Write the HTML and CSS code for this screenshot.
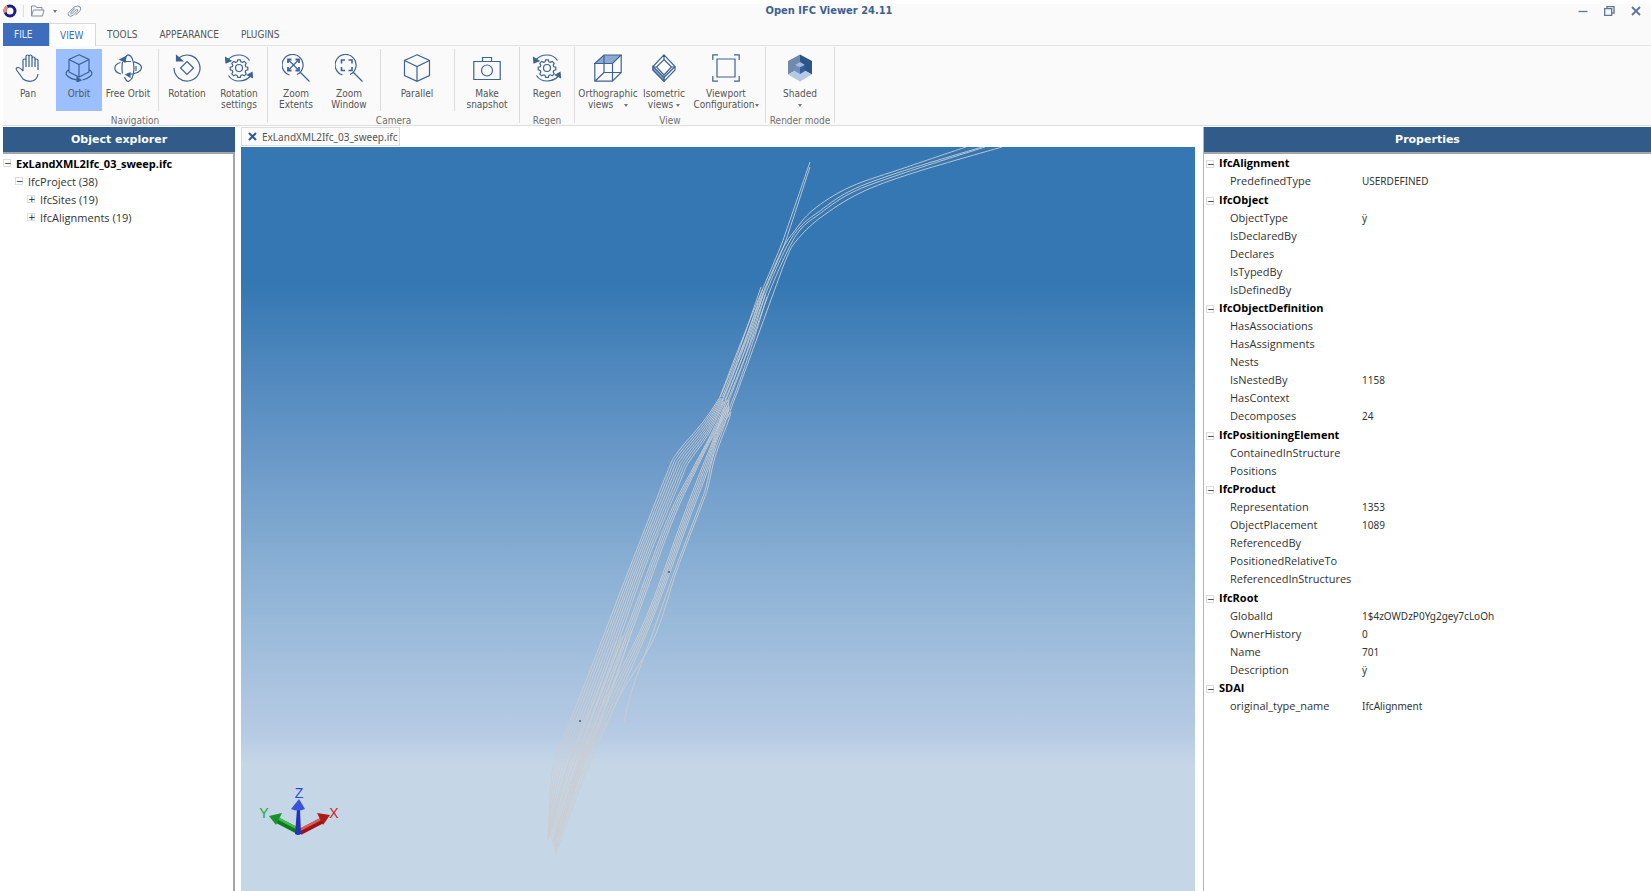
FILE: index.html
```html
<!DOCTYPE html>
<html lang="en">
<head>
<meta charset="utf-8">
<title>Open IFC Viewer 24.11</title>
<link rel="stylesheet" href="styles.css">
</head>
<body>
<div class="app">
  <header class="titlebar">
    <div class="quick">
      <svg class="logo" viewBox="0 0 14 14"><circle cx="7" cy="7" r="5" fill="none" stroke="#1d1a86" stroke-width="3"/><path d="M2.300 8.500A5 5 0 0 1 4.500 2.700" fill="none" stroke="#f08a6c" stroke-width="3"/></svg>
      <span class="quick-sep"></span>
      <button class="quick-btn" aria-label="Open"><svg width="15" height="12" viewBox="0 0 15 12"><path d="M1.500 11V1h4l1 1.500H12V5M1.500 11L3.500 5H14L12.500 11Z"/></svg></button>
      <button class="quick-btn" aria-label="More"><span class="caret"></span></button>
      <button class="quick-btn" aria-label="Attach"><svg width="15" height="13" viewBox="0 0 15 13"><path d="M5 8.500L9.500 4.500Q11 4 10.500 6L6.500 10Q3.500 12.500 1.500 10.500Q.2 8.500 2.500 6.500L7.500 2Q11 .0 13.200 2Q14.700 4.200 12.500 6.500L8.500 10M4 9.500Q3.500 7 6 5L8 3.500"/></svg></button>
    </div>
    <h1 class="title">Open IFC Viewer 24.11</h1>
    <div class="window-controls">
      <button aria-label="Minimize"><svg width="10" height="10" viewBox="0 0 10 10"><path d="M.5 5.500h9"/></svg></button>
      <button aria-label="Restore"><svg width="11" height="10" viewBox="0 0 11 10"><path d="M.7 2.700h7v6.800h-7zM3 2.500V.6h7v6.500H8"/></svg></button>
      <button aria-label="Close"><svg width="10" height="10" viewBox="0 0 10 10"><path d="M1 1l8 8M9 1l-8 8" stroke-width="1.800"/></svg></button>
    </div>
  </header>

  <nav class="tabs">
    <button class="tab tab-file">FILE</button>
    <button class="tab tab-active">VIEW</button>
    <button class="tab">TOOLS</button>
    <button class="tab">APPEARANCE</button>
    <button class="tab">PLUGINS</button>
  </nav>

  <section class="ribbon">
    <div class="group">
      <div class="tools tools-nav">
        <button class="tool w50"><svg viewBox="0 0 28 28"><path d="M9 17V6.500a1.500 1.500 0 0 1 3 0V13M12 13V2.500a1.500 1.500 0 0 1 3 0V13M15 13V2.500a1.500 1.500 0 0 1 3 0V13M18 4.500a1.500 1.500 0 0 1 3 0V13M21 6.500a1.500 1.500 0 0 1 3 0V16M9 17Q6 13.500 4 13.500Q1.500 13.500 2.500 16Q7 22 9 25Q11.500 27.300 16 27.300Q23 27 24 20"/></svg><span>Pan</span></button>
        <button class="tool w46 tool-on"><svg viewBox="0 0 28 28"><path d="M14 .8L24 5.500V18L14 23L4 18V5.500ZM4 5.500L14 10.500L24 5.500M14 10.500V23M4 15.500Q-1 19 2.500 22Q6.500 25.500 14 26.200M24 15.500Q29 19 25.500 22Q22.500 25 17.500 26"/><path class="solid" d="M12 23.500L16 26.200L12 28Z"/></svg><span>Orbit</span></button>
        <button class="tool w52"><svg viewBox="0 0 28 28"><path d="M10.500 23Q12 27.300 14.500 27.300Q19.500 26 20 14Q19.500 2 14.500 .8Q12.500 .8 11 4M8.500 8Q7.500 14 8.500 19.500M10 7.500H17M20 7.800Q27.500 9.500 27.500 14Q26.500 19.500 14 20.500M7 20Q.8 18.500 .8 14Q1 10 6.500 8.500M22 12v5"/><path class="solid" d="M6 5.500L12 2.500L11 8ZM16 19V23L12 20.700Z"/></svg><span>Free Orbit</span></button>
        <i class="tool-sep"></i>
        <button class="tool w56"><svg viewBox="0 0 28 28"><path d="M6 3.800A13 13 0 1 1 1 14M14 7.500L20.500 14L14 20.500L7.500 14Z"/><path class="solid" d="M3.500 1.500V7H9.500Z"/></svg><span>Rotation</span></button>
        <button class="tool w48"><svg viewBox="0 0 28 28"><use href="#regen"/></svg><span>Rotation<br>settings</span></button>
      </div>
      <div class="caption">Navigation</div>
    </div>

    <div class="group">
      <div class="tools tools-cam">
        <button class="tool w52"><svg viewBox="0 0 28 28"><path d="M7.500 21A10.500 10.500 0 1 1 15 20.500M18.500 18.500L27.500 27.500M6.500 6L16.500 16M16.500 6L6.500 16"/><path d="M6 9V5.500H9.500M13.500 5.500H17V9M6 13V16.500H9.500M13.500 16.500H17V13" stroke-width="1.800"/></svg><span>Zoom<br>Extents</span></button>
        <button class="tool w54"><svg viewBox="0 0 28 28"><path d="M7.500 21A10.500 10.500 0 1 1 15 20.500M18.500 18.500L27.500 27.500"/><path d="M6.500 9.500V6H10M13.500 6H17V9.500M6.500 13V16.500H10M13.500 16.500H17V13" stroke-width="1.600"/></svg><span>Zoom<br>Window</span></button>
        <i class="tool-sep"></i>
        <button class="tool w72"><svg viewBox="0 0 28 28"><path d="M14 .8L26.500 6.500V21.500L14 27.300L1.500 21.500V6.500ZM1.500 6.500L14 12.500L26.500 6.500M14 12.500V27.300"/></svg><span>Parallel</span></button>
        <i class="tool-sep"></i>
        <button class="tool w64"><svg viewBox="0 0 28 28"><path d="M.8 7.500H27.200V25.500H.8ZM9.500 7V3.500H18.500V7"/><circle cx="14" cy="16.500" r="5.500"/></svg><span>Make<br>snapshot</span></button>
      </div>
      <div class="caption">Camera</div>
    </div>

    <div class="group">
      <div class="tools">
        <button class="tool w54"><svg viewBox="0 0 28 28"><g id="regen"><path d="M2.500 6Q7 1 14 1Q21 1 24.500 6.500M25.500 22Q21 27 14 27Q7 27 3.500 21.500"/><path class="solid" d="M.5 3.500L1 9L6 7ZM22.500 21L27 18.500L27.500 23.500Z"/><circle cx="14" cy="14" r="3.500"/><path d="M12.700 5.800h2.600l.6 2 1.500.6 1.900-1 1.900 1.900-1 1.900.6 1.500 2 .6v2.600l-2 .6-.6 1.500 1 1.900-1.900 1.900-1.900-1-1.500.6-.6 2h-2.600l-.6-2-1.500-.6-1.900 1-1.900-1.900 1-1.900-.6-1.500-2-.6v-2.600l2-.6.6-1.500-1-1.900 1.900-1.900 1.900 1 1.500-.6Z"/></g></svg><span>Regen</span></button>
      </div>
      <div class="caption">Regen</div>
    </div>

    <div class="group">
      <div class="tools tools-view">
        <button class="tool w58"><svg viewBox="0 0 28 28"><path d="M.8 9.500L10 1H27.200L18.500 9.500Z" fill="#8ea9cf"/><path d="M.8 9.500V27.200H18.500V9.500M18.500 27.200L27.200 18.500V1M10 9.500V18.500H27M10 18.500L.8 27.200M10 1V9"/></svg><span>Orthographic<br>views <b class="caret caret-far"></b></span></button>
        <button class="tool w54"><svg viewBox="0 0 28 28"><path d="M14 .8L25 12.500V16L14 27.300L3 16V12.500ZM14 5.500L21.500 13L14 21L6.500 13ZM14 .8V5.500M3 13H6.500M21.500 13H25M14 21V27.300"/><path d="M3 12.500L14 23.500V27L3 16ZM25 12.500L14 23.500" fill="#8ea9cf"/></svg><span>Isometric<br>views <b class="caret"></b></span></button>
        <button class="tool w70"><svg viewBox="0 0 28 28"><path d="M5 5H23V23H5Z"/><path d="M.8 6V.8H6M22 .8H27.200V6M.8 22V27.200H6M22 27.200H27.200V22"/></svg><span>Viewport<br>Configuration<b class="caret"></b></span></button>
      </div>
      <div class="caption">View</div>
    </div>

    <div class="group">
      <div class="tools">
        <button class="tool w68"><svg class="flat" viewBox="0 0 28 28"><path fill="#7189aa" d="M14 .5L2 7V20.500L14 14Z"/><path fill="#2d548b" d="M14 .5L26 7V20.500L14 14Z"/><path fill="#b5c8e4" d="M2 20.500L14 14L26 20.500L14 27.500Z"/><path fill="#a5bbdb" d="M14 8L19 11L14 13.500L9 11Z"/><path fill="#6f8eb9" d="M9 11L14 13.500V20L9 17Z"/><path fill="#37609a" d="M19 11L14 13.500V20L19 17Z"/></svg><span>Shaded<br><b class="caret"></b></span></button>
      </div>
      <div class="caption">Render mode</div>
    </div>
  </section>

  <main class="workspace">
    <aside class="panel explorer">
      <h2 class="panel-title">Object explorer</h2>
      <ul class="tree">
        <li><div class="node root"><button class="toggle" aria-label="Collapse">−</button>ExLandXML2Ifc_03_sweep.ifc</div>
          <ul>
            <li><div class="node"><button class="toggle" aria-label="Collapse">−</button>IfcProject (38)</div>
              <ul>
                <li><div class="node"><button class="toggle" aria-label="Expand">+</button>IfcSites (19)</div></li>
                <li><div class="node"><button class="toggle" aria-label="Expand">+</button>IfcAlignments (19)</div></li>
              </ul>
            </li>
          </ul>
        </li>
      </ul>
    </aside>

    <section class="document">
      <div class="doc-tabs">
        <button class="doc-tab"><svg width="9" height="9" viewBox="0 0 9 9"><path d="M1 1l7 7M8 1L1 8"/></svg>ExLandXML2Ifc_03_sweep.ifc</button>
      </div>
      <div class="viewport">
        <svg class="scene" viewBox="241 147 954 744" preserveAspectRatio="xMinYMin slice">
          <g id="strands"></g>
          <circle cx="669" cy="572" r="1" fill="#4c5a68" stroke="none"/>
          <circle cx="580" cy="721" r="1" fill="#4c5a68" stroke="none"/>
        </svg>
        <svg class="axes" width="84" height="56" viewBox="0 0 84 56">
          <path d="M41 47L18 35" stroke="#0d7a1c" stroke-width="6"/><path d="M41 45L18 33" stroke="#3fc04a" stroke-width="2"/>
          <path d="M10 31L23 28L17 40Z" fill="#17932a"/>
          <path d="M41 47L64 35" stroke="#9c1517" stroke-width="6"/><path d="M41 45L64 33" stroke="#e06060" stroke-width="2"/>
          <path d="M71 30L58 28L64 40Z" fill="#ad1a1a"/>
          <path d="M38 24L36 49Q39 51 42 49L41 24Z" fill="#2433b5"/><path d="M40 14L32 24Q39 27 46 24Z" fill="#3a53dc"/>
          <text x="40" y="13" fill="#2a49e0">Z</text><text x="5" y="33" fill="#22a833">Y</text><text x="75" y="33" fill="#cf2327">X</text>
        </svg>
      </div>
    </section>

    <aside class="panel properties">
      <h2 class="panel-title">Properties</h2>
      <table class="props">
        <colgroup><col class="col-name"><col></colgroup>
        <tbody>
          <tr class="head"><th colspan="2"><button class="toggle" aria-label="Collapse">−</button>IfcAlignment</th></tr>
          <tr><td>PredefinedType</td><td>USERDEFINED</td></tr>
        </tbody>
        <tbody>
          <tr class="head"><th colspan="2"><button class="toggle" aria-label="Collapse">−</button>IfcObject</th></tr>
          <tr><td>ObjectType</td><td>ÿ</td></tr>
          <tr><td>IsDeclaredBy</td><td></td></tr>
          <tr><td>Declares</td><td></td></tr>
          <tr><td>IsTypedBy</td><td></td></tr>
          <tr><td>IsDefinedBy</td><td></td></tr>
        </tbody>
        <tbody>
          <tr class="head"><th colspan="2"><button class="toggle" aria-label="Collapse">−</button>IfcObjectDefinition</th></tr>
          <tr><td>HasAssociations</td><td></td></tr>
          <tr><td>HasAssignments</td><td></td></tr>
          <tr><td>Nests</td><td></td></tr>
          <tr><td>IsNestedBy</td><td>1158</td></tr>
          <tr><td>HasContext</td><td></td></tr>
          <tr><td>Decomposes</td><td>24</td></tr>
        </tbody>
        <tbody>
          <tr class="head"><th colspan="2"><button class="toggle" aria-label="Collapse">−</button>IfcPositioningElement</th></tr>
          <tr><td>ContainedInStructure</td><td></td></tr>
          <tr><td>Positions</td><td></td></tr>
        </tbody>
        <tbody>
          <tr class="head"><th colspan="2"><button class="toggle" aria-label="Collapse">−</button>IfcProduct</th></tr>
          <tr><td>Representation</td><td>1353</td></tr>
          <tr><td>ObjectPlacement</td><td>1089</td></tr>
          <tr><td>ReferencedBy</td><td></td></tr>
          <tr><td>PositionedRelativeTo</td><td></td></tr>
          <tr><td>ReferencedInStructures</td><td></td></tr>
        </tbody>
        <tbody>
          <tr class="head"><th colspan="2"><button class="toggle" aria-label="Collapse">−</button>IfcRoot</th></tr>
          <tr><td>GlobalId</td><td>1$4zOWDzP0Yg2gey7cLoOh</td></tr>
          <tr><td>OwnerHistory</td><td>0</td></tr>
          <tr><td>Name</td><td>701</td></tr>
          <tr><td>Description</td><td>ÿ</td></tr>
        </tbody>
        <tbody>
          <tr class="head"><th colspan="2"><button class="toggle" aria-label="Collapse">−</button>SDAI</th></tr>
          <tr><td>original_type_name</td><td>IfcAlignment</td></tr>
        </tbody>
      </table>
    </aside>
  </main>
</div>
<script src="scene.js"></script>
</body>
</html>
```

FILE: styles.css
```css
* { box-sizing: border-box; }
html, body { height: 100%; }
body { margin: 0; background: #fff; font-family: "DejaVu Sans Condensed", "DejaVu Sans", sans-serif; font-size: 10px; color: #555; overflow: hidden; }
button { font: inherit; color: inherit; background: none; border: 0; padding: 0; }
ul { list-style: none; margin: 0; padding: 0; }
h1, h2 { margin: 0; }
svg { display: block; fill: none; stroke: #3d6393; }
.app { min-height: 100vh; padding: 4px 0 0 3px; display: flex; flex-direction: column; }

.titlebar { display: grid; grid-template-columns: 1fr auto 1fr; align-items: center; height: 19px; padding-bottom: 5px; background: #fafafa; }
.quick { display: flex; align-items: center; gap: 6px; }
.logo { width: 14px; height: 14px; }
.quick-sep { width: 1px; height: 12px; background: #ddd; }
.quick-btn:first-of-type { margin-right: 2px; }
.quick-btn:last-of-type { margin-left: 4px; }
.quick-btn svg { stroke: #7d90a8; }
.title { font: bold 11px/14px "DejaVu Sans Condensed", "DejaVu Sans", sans-serif; color: #3d628f; padding-left: 4px; }
.window-controls { display: flex; justify-content: flex-end; gap: 16px; padding-right: 10px; }
.window-controls svg { stroke: #5c7599; stroke-width: 1.300; }

.tabs { display: flex; height: 23px; background: #fafafa; border-bottom: 1px solid #e2e2e2; }
.tab { padding: 0 11px; line-height: 24px; margin-bottom: -1px; text-align: left; }
.tab-file { width: 46px; background: #3f6dbd; color: #e6eefb; }
.tab-active { width: 47px; padding: 0 10px; line-height: 23px; background: #fff; color: #3f6dbd; border: 1px solid #d8d8d8; border-bottom: 0; }

.ribbon { display: flex; height: 80px; background: #fafafa; border-bottom: 1px solid #dedede; }
.group { display: flex; flex-direction: column; gap: 4px; border-right: 1px solid #dcdcdc; margin-top: 1px; margin-bottom: 2px; }
.tools { display: flex; padding-top: 2px; height: 64px; }
.tools-nav { padding-right: 4px; }
.tools-cam { padding-left: 2px; }
.tools-view { padding: 2px 4px 0; }
.tool { display: flex; flex-direction: column; align-items: center; gap: 6px; padding-top: 5px; height: 62px; line-height: 11px; white-space: nowrap; }
.tool svg { width: 28px; height: 28px; stroke-width: 1.200; flex: none; }
.tool .solid { fill: #3d6393; }
.tool svg.flat { stroke: none; }
.tool-on { background: #9bbfff; margin-left: 3px; }
.tool-sep { width: 1px; height: 62px; background: #dcdcdc; margin: 0 0 0 4px; }
.tools-cam .w72 + .tool-sep { margin-left: 1px; }
.w46 { width: 46px; } .w48 { width: 48px; } .w50 { width: 50px; } .w52 { width: 52px; } .w54 { width: 54px; } .w56 { width: 56px; }
.w58 { width: 58px; } .w64 { width: 64px; } .w68 { width: 68px; } .w70 { width: 70px; } .w72 { width: 72px; }
.caption { text-align: center; line-height: 11px; color: #707070; }
.caret { display: inline-block; border: 2px solid transparent; border-top: 3px solid #777; border-bottom: 0; vertical-align: middle; }
.caret-far { margin-left: 8px; }

.workspace { flex: 1; display: grid; grid-template-columns: 232px 1fr 448px; padding-top: 1px; }
.panel { display: flex; flex-direction: column; }
.panel-title { height: 25px; background: #315b88; color: #fff; text-align: center; font: bold 11px/25px "DejaVu Sans", sans-serif; }
.tree, .props { font-family: "Open Sans", "Noto Sans", sans-serif; font-size: 11px; color: #333; }
.tree { flex: 1; border-top: 2px solid #a5a5a5; border-right: 2px solid #a5a5a5; }
.tree ul { padding-left: 12px; }
.node { display: flex; align-items: center; height: 18px; gap: 5px; }
.root, .props th { font-weight: bold; color: #000; }
.toggle { flex: none; width: 8px; height: 8px; border: 1px solid #ddd; background: #fff; font: 9px/6px "DejaVu Sans", sans-serif; color: #222; }

.document { padding: 0 8px 0 6px; display: flex; flex-direction: column; min-width: 0; }
.doc-tabs { height: 20px; display: flex; }
.doc-tab { display: flex; align-items: center; gap: 5px; height: 19px; padding: 0 2px 0 6px; border: 1px solid #ddd; background: #fcfcfc; font-family: "Noto Sans", sans-serif; }
.doc-tab svg { stroke: #2f5b8c; stroke-width: 2; }
.viewport { flex: 1; position: relative; background: linear-gradient(#3477b2 0, #3477b2 18%, #6495c6 39%, #93b6d7 61%, #b7cbe4 79%, #c5d6e7 83%, #c5d6e7); }
.scene { position: absolute; inset: 0; width: 100%; height: 100%; }
#strands { stroke: #cbcdd0; stroke-width: 1; stroke-opacity: .9; }
.axes { position: absolute; left: 18px; bottom: 50px; }
.axes path[fill] { stroke: none; }
.axes text { font: 14px "Liberation Sans", sans-serif; stroke: none; text-anchor: middle; }

.properties { border-left: 1px solid #b5b5b5; }
.props { border-collapse: collapse; width: 100%; border-top: 2px solid #a5a5a5; table-layout: fixed; }
.col-name { width: 158px; }
.props th, .props td { height: 18px; padding: 0; line-height: 18px; text-align: left; }
.props tbody:nth-of-type(even) th { height: 19px; }
.props th { padding-left: 2px; }
.props th .toggle { vertical-align: middle; margin-right: 5px; }
.props td:first-child { padding-left: 26px; }
.props td:last-child { font: 10px/18px "Noto Sans", sans-serif; }
```

FILE: scene.js
```js
// Each bundle runs between two edge strands; the strands between are interpolated.
const bundles = [
  { n: 1, a: [[966,147],[907,167],[850,187],[813,210],[793,233],[782,250],[763,293],[745,340],[722,397]] },
  { n: 2, a: [[982,147],[900,172],[850,191],[817,213],[800,227],[786,248],[766,293],[748,343],[725,400]],
          b: [[985,147],[901,174],[851,193],[818,215],[801,229],[788,250],[769,293],[750,345],[727,402]] },
  { n: 1, a: [[1002,147],[913,173],[860,193],[820,218],[797,240],[787,257],[772,297],[748,363],[728,417]] },
  { n: 2, a: [[810,162],[790,220],[780,248],[761,293],[738,350],[720,397]],
          b: [[810,167],[792,222],[783,248],[764,293],[742,352],[723,400]] },
  { n: 5, a: [[761,287],[738,353],[720,397]],
          b: [[767,297],[747,360],[728,412]] },
  { n: 8, a: [[720,397],[703,422],[677,453],[667,473],[630,567],[593,663],[560,747],[552,773],[548,837]],
          b: [[725,402],[708,435],[689,462],[680,482],[645,567],[611,663],[580,747],[566,787],[548,840]] },
  { n: 4, a: [[725,405],[708,440],[692,470],[667,520],[630,620],[597,703],[575,770],[562,805],[553,842]],
          b: [[728,410],[711,440],[696,470],[673,520],[636,620],[606,703],[580,770],[567,812],[555,854]] },
  { n: 5, a: [[727,400],[713,440],[701,470],[682,520],[645,620],[604,703],[577,770],[553,842]],
          b: [[730,412],[717,440],[708,470],[689,520],[652,620],[616,703],[587,770],[556,853]] },
  { n: 2, a: [[729,400],[726,420],[713,457],[706,487],[699,507],[675,570],[651,638],[633,687],[624,722]],
          b: [[731,412],[728,422],[715,457],[708,487],[701,507],[677,570],[654,638],[622,692],[597,745]] },
  { n: 4, a: [[617,640],[598,690],[567,770],[549,838]],
          b: [[632,630],[612,690],[582,770],[553,845]] }
];

// Catmull-Rom spline through the points, as cubic Béziers.
function spline(p) {
  let d = `M${p[0]}`;
  for (let i = 0; i < p.length - 1; i++) {
    const p0 = p[i - 1] || p[i], p1 = p[i], p2 = p[i + 1], p3 = p[i + 2] || p2;
    const c1 = [p1[0] + (p2[0] - p0[0]) / 6, p1[1] + (p2[1] - p0[1]) / 6];
    const c2 = [p2[0] - (p3[0] - p1[0]) / 6, p2[1] - (p3[1] - p1[1]) / 6];
    d += `C${c1} ${c2} ${p2}`;
  }
  return d;
}

const host = document.getElementById("strands");
for (const { n, a, b = a } of bundles) {
  for (let i = 0; i < n; i++) {
    const t = n > 1 ? i / (n - 1) : 0;
    const path = document.createElementNS("http://www.w3.org/2000/svg", "path");
    path.setAttribute("d", spline(a.map(([x, y], k) => [x + (b[k][0] - x) * t, y + (b[k][1] - y) * t])));
    host.append(path);
  }
}
```
